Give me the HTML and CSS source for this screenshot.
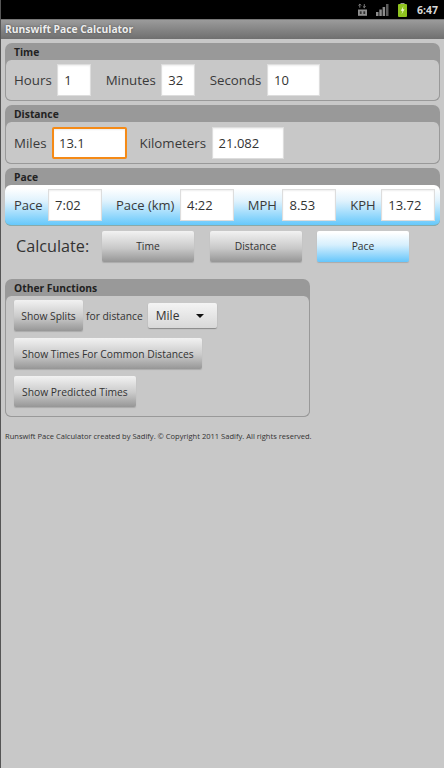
FILE: index.html
```html
<!DOCTYPE html>
<html lang="en">
<head>
<meta charset="utf-8">
<title>Runswift Pace Calculator</title>
<link rel="stylesheet" href="styles.css">
</head>
<body>
<div class="statusbar">
  <svg class="ic-data" width="9" height="13" viewBox="0 0 10 14"><path d="M2 1v4M0.5 2.500L2 1l1.500 1.500M7 5V1M5.500 3.500L7 5l1.500-1.500" stroke="#8a8a8a" fill="none"/><rect x="0" y="7" width="10" height="7" fill="#8f8f8f"/><rect x="2" y="9" width="2" height="3" fill="#333"/><rect x="6" y="9" width="2" height="3" fill="#333"/></svg>
  <svg class="ic-signal" width="13" height="12" viewBox="0 0 13 12"><rect x="0" y="8" width="2.500" height="4" fill="#8c8c8c"/><rect x="3.300" y="5.500" width="2.500" height="6.500" fill="#8c8c8c"/><rect x="6.600" y="3" width="2.500" height="9" fill="#8c8c8c"/><rect x="10" y="0" width="2.500" height="12" fill="#5c5c5c"/></svg>
  <svg class="ic-batt" width="9" height="14" viewBox="0 0 9 14"><rect x="2.500" y="0" width="4" height="2" fill="#9c9c9c"/><rect x="0" y="1" width="9" height="13" rx="1" fill="#8fc31f"/><path d="M5.500 3L2.800 7.800h1.800L3.500 11.500 6.500 6.300H4.700z" fill="#f0f8d8"/></svg>
  <span class="clock">6:47</span>
</div>
<div class="titlebar">Runswift Pace Calculator</div>
<main class="content">
  <section class="panel">
    <h2 class="panel-head">Time</h2>
    <div class="panel-body">
      <label class="lbl">Hours</label><span class="field w-s">1</span>
      <label class="lbl gap">Minutes</label><span class="field w-s">32</span>
      <label class="lbl gap">Seconds</label><span class="field w-m">10</span>
    </div>
  </section>
  <section class="panel">
    <h2 class="panel-head">Distance</h2>
    <div class="panel-body tall">
      <label class="lbl">Miles</label><span class="field focus">13.1</span>
      <label class="lbl gap-12">Kilometers</label><span class="field w-l">21.082</span>
    </div>
  </section>
  <section class="panel">
    <h2 class="panel-head">Pace</h2>
    <div class="panel-body blue">
      <label class="lbl">Pace</label><span class="field w-p">7:02</span>
      <label class="lbl gap">Pace (km)</label><span class="field w-p">4:22</span>
      <label class="lbl gap">MPH</label><span class="field w-p">8.53</span>
      <label class="lbl gap">KPH</label><span class="field w-p">13.72</span>
    </div>
  </section>
  <div class="calc-row">
    <span class="calc-label">Calculate:</span>
    <button class="btn calc">Time</button>
    <button class="btn calc">Distance</button>
    <button class="btn calc active">Pace</button>
  </div>
  <section class="panel other">
    <h2 class="panel-head">Other Functions</h2>
    <div class="panel-body stack">
      <div class="split-row">
        <button class="btn splits">Show Splits</button>
        <span class="for">for distance</span>
        <span class="select">Mile<i class="arrow"></i></span>
      </div>
      <button class="btn">Show Times For Common Distances</button>
      <button class="btn">Show Predicted Times</button>
    </div>
  </section>
  <p class="footer">Runswift Pace Calculator created by Sadify. © Copyright 2011 Sadify. All rights reserved.</p>
</main>
</body>
</html>
```
FILE: styles.css
```css
* { box-sizing: border-box; }
html, body { margin: 0; height: 100%; }
body {
  width: 444px; height: 768px; overflow: hidden;
  background: #c8c8c8;
  font-family: "Open Sans", "Noto Sans", sans-serif;
  color: #333;
  border-left: 1px solid #555;
}
.statusbar {
  height: 19px; margin-left: -1px; background: #000;
  display: flex; align-items: center; justify-content: flex-end;
  padding-right: 6px;
}
.ic-data { margin-right: 9px; }
.ic-signal { margin-right: 9px; }
.ic-batt { margin-right: 10px; }
.clock { color: #d8d8d8; font-size: 10.500px; font-weight: 700; }
.titlebar {
  height: 20px; line-height: 19px;
  padding-left: 4px;
  background: linear-gradient(#9b9b9b, #6f6f6f);
  color: #eee; font-size: 10.300px; font-weight: 700;
  text-shadow: 0 0 2px #444;
  border-top: 1px solid #777;
}
.content { padding: 4px 4px 0 4px; }
.panel {
  background: #999; border-radius: 7px;
  margin-bottom: 4px;
}
.panel-head {
  margin: 0; height: 17px; line-height: 18px;
  padding-left: 9px;
  font-size: 10.300px; font-weight: 700; color: #222;
}
.panel-body {
  height: 41px; display: flex; align-items: center;
  padding: 0 8px;
  background: #c8c8c8;
  border: 1px solid #999; border-top: 0;
  border-radius: 6px;
}
.panel-body.tall { height: 42px; }
.panel-body.blue {
  background: linear-gradient(#fff 8%, #dff2fd 40%, #66c8fb);
  border: 0; border-bottom: 1px solid #8aa;
  padding: 0 5px 0 9px;
}
.lbl { font-size: 13.300px; color: #3a3a3a; margin-right: 5.500px; white-space: nowrap; }
.gap { margin-left: 14.400px; }
.gap-12 { margin-left: 12.500px; }
.blue .lbl { font-size: 13px; }
.blue .gap { margin-left: 13.900px; }
.field {
  height: 32px; line-height: 31px; padding-left: 6px;
  background: #fff; font-size: 13px; color: #333;
  border: 1px solid #ddd;
  box-shadow: inset 0 1px 2px #eee;
  display: block; flex: none;
}
.w-s { width: 34px; }
.w-m { width: 53px; }
.w-l { width: 72px; }
.w-p { width: 54px; }
.field.focus {
  width: 75px; border: 2px solid #f58a16;
  border-radius: 2px; padding-left: 5px; line-height: 29px;
}
.calc-row {
  display: flex; align-items: center; height: 32px;
  margin: 0 0 17px 0; padding-left: 11px;
}
.calc-label { font-size: 16.200px; color: #333; width: 86px; white-space: nowrap; }
.btn {
  font-family: inherit; font-size: 10.300px; color: #333;
  height: 31px; padding: 0 8px;
  border: 0; border-radius: 2px;
  background: linear-gradient(#f2f2f2 0%, #c9c9c9 55%, #969696 100%);
  box-shadow: 0 1px 1px #aaa;
  display: block;
}
.btn.splits { width: 69px; padding: 0; }
.calc { width: 92px; margin-right: 15.500px; }
.calc.active { background: linear-gradient(#fff 5%, #d6effd 45%, #66c6fb); }
.other { width: 305px; }
.stack {
  height: auto; display: block; padding: 4px 8px 9px 8px;
}
.stack > .btn { margin-top: 7px; }
.split-row { display: flex; align-items: center; }
.for { font-size: 10.300px; color: #333; margin-left: 3px; }
.select {
  width: 69px; height: 25px; line-height: 25px; margin: 0 0 1px 5px;
  padding-left: 8px; font-size: 12px; position: relative; color: #333;
  background: linear-gradient(#f4f4f4, #d8d8d8);
  border-radius: 2px; box-shadow: 0 1px 1px #888;
}
.arrow {
  position: absolute; right: 13px; top: 11px;
  border: 4px solid transparent; border-top: 4px solid #111; border-bottom: 0;
}
.footer { margin: 14px 0 0 0; font-size: 7.550px; color: #333; white-space: nowrap; }
```
